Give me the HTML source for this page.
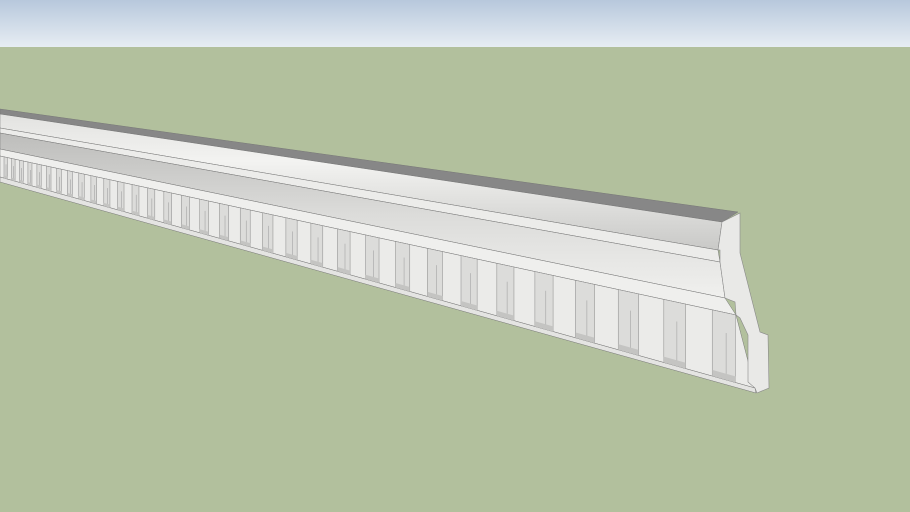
<!DOCTYPE html>
<html><head><style>
html,body{margin:0;padding:0;width:910px;height:512px;overflow:hidden;background:#b2c09d}
</style></head><body>
<svg id="s" width="910" height="512" viewBox="0 0 910 512" xmlns="http://www.w3.org/2000/svg">
<defs>
<linearGradient id="sky" x1="0" y1="0" x2="0" y2="1"><stop offset="0" stop-color="#b7c8dc"/><stop offset="1" stop-color="#e6edf3"/></linearGradient>
<linearGradient id="ov" x1="0" y1="0" x2="0" y2="1"><stop offset="0" stop-color="#e2e2e0"/><stop offset="0.35" stop-color="#f3f3f1"/><stop offset="1" stop-color="#c9c9c7"/></linearGradient>
<linearGradient id="cv" x1="0" y1="0" x2="0" y2="1"><stop offset="0" stop-color="#bdbdbb"/><stop offset="0.5" stop-color="#dcdcda"/><stop offset="1" stop-color="#f0f0ee"/></linearGradient>
</defs>
<rect x="0" y="0" width="910" height="47" fill="url(#sky)"/>
<rect x="0" y="47" width="910" height="465" fill="#b2c09d"/>
<g id="m" stroke="#777" stroke-width="0.5">
<polygon points="0,109 738,212 722,222 0,114" fill="#878787"/>
<polygon points="0,114 722,222 718,250 0,128" fill="url(#ov)"/>
<polygon points="0,128 718,250 720,262 0,133" fill="#ececea"/>
<polygon points="0,133 720,262 725,298 0,149" fill="url(#cv)"/>
<polygon points="0,149 725,298 736,315 0,156" fill="#efefed"/>
<polygon points="0,156 736,315 755,388 0,177" fill="#ebebe9"/>
<polygon points="0,177 755,388 756,393 0,182" fill="#e4e4e2"/>
</g>
<g id="d"></g>
<polygon points="722,222 740,213 740,253 760,332 768,335 769,388 757,393 755,388 748,382 748,335 740,318 736,315 735,302 725,298 720,262 720,250 718,250" fill="#e9e9e7" stroke="#8a8a8a" stroke-width="0.6"/>
</svg>
<script>
var g=document.getElementById('d'),ns='http://www.w3.org/2000/svg',h='';
function yt(x){return 156+(315-156)*x/736}
function yb(x){return 177+(388-177)*x/755}
var x=4,s=7.5;
while(x<720){
 var w=s*0.45,x2=x+w;
 // recess
 h+='<polygon points="'+x+','+yt(x)+' '+x2+','+yt(x2)+' '+x2+','+yb(x2)+' '+x+','+yb(x)+'" fill="#dcdcda" stroke="#888" stroke-width="0.5"/>';
 h+='<line x1="'+(x+w*0.6)+'" y1="'+(yt(x)+(yb(x)-yt(x))*0.35)+'" x2="'+(x+w*0.6)+'" y2="'+yb(x)+'" stroke="#999" stroke-width="0.5"/>';
 h+='<polygon points="'+x+','+(yb(x)-2-s*0.08)+' '+x2+','+(yb(x2)-2-s*0.08)+' '+x2+','+yb(x2)+' '+x+','+yb(x)+'" fill="#c4c4c2"/>';
 x+=s; s*=1.062;
}
g.innerHTML=h;
</script>
</body></html>
